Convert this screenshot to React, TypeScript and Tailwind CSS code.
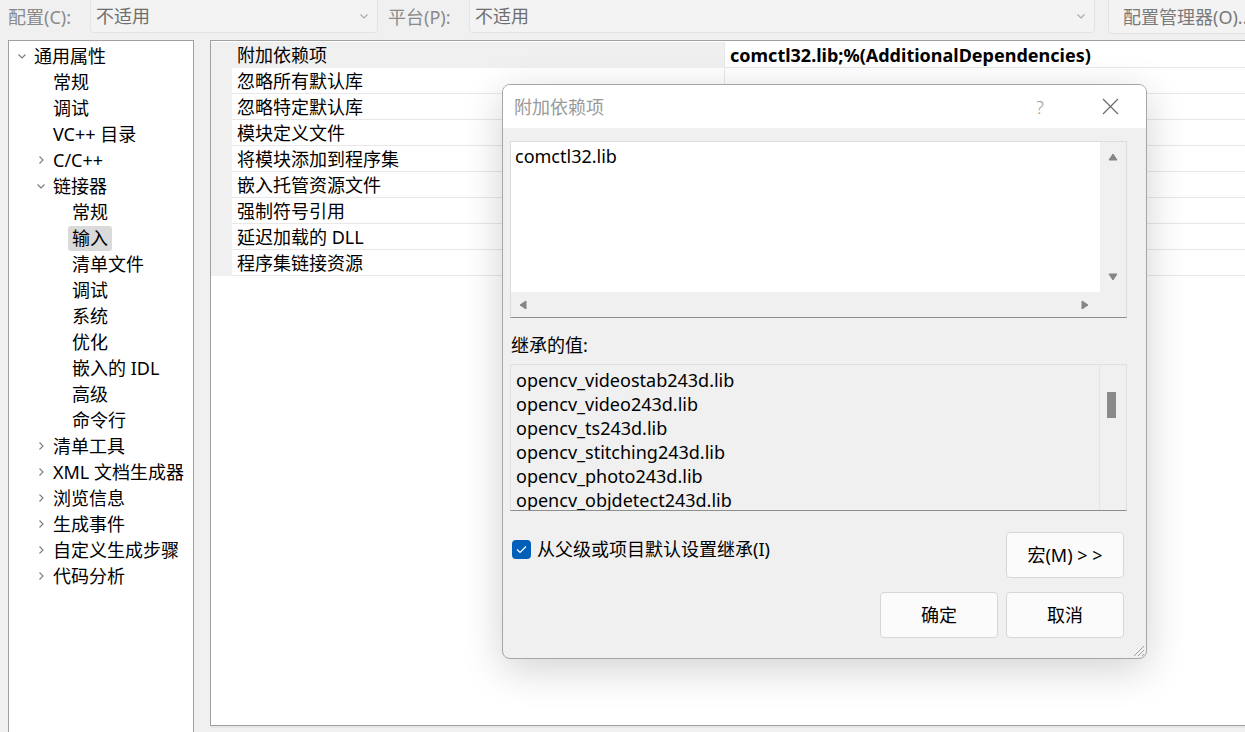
import React from 'react';

type TreeItem = { text: string; level: number; chevron?: 'down' | 'right'; selected?: boolean };

const treeItems: TreeItem[] = [
  { text: '通用属性', level: 0, chevron: 'down' },
  { text: '常规', level: 1 },
  { text: '调试', level: 1 },
  { text: 'VC++ 目录', level: 1 },
  { text: 'C/C++', level: 1, chevron: 'right' },
  { text: '链接器', level: 1, chevron: 'down' },
  { text: '常规', level: 2 },
  { text: '输入', level: 2, selected: true },
  { text: '清单文件', level: 2 },
  { text: '调试', level: 2 },
  { text: '系统', level: 2 },
  { text: '优化', level: 2 },
  { text: '嵌入的 IDL', level: 2 },
  { text: '高级', level: 2 },
  { text: '命令行', level: 2 },
  { text: '清单工具', level: 1, chevron: 'right' },
  { text: 'XML 文档生成器', level: 1, chevron: 'right' },
  { text: '浏览信息', level: 1, chevron: 'right' },
  { text: '生成事件', level: 1, chevron: 'right' },
  { text: '自定义生成步骤', level: 1, chevron: 'right' },
  { text: '代码分析', level: 1, chevron: 'right' },
];

const properties = [
  '附加依赖项',
  '忽略所有默认库',
  '忽略特定默认库',
  '模块定义文件',
  '将模块添加到程序集',
  '嵌入托管资源文件',
  '强制符号引用',
  '延迟加载的 DLL',
  '程序集链接资源',
];

const inherited = [
  'opencv_videostab243d.lib',
  'opencv_video243d.lib',
  'opencv_ts243d.lib',
  'opencv_stitching243d.lib',
  'opencv_photo243d.lib',
  'opencv_objdetect243d.lib',
];

const Chevron = ({ dir, color = '#7a7a7a' }: { dir: 'down' | 'right'; color?: string }) => (
  <svg width="10" height="10" viewBox="0 0 10 10" fill="none">
    {dir === 'down' ? (
      <path d="M1.5 3.5 L5 7 L8.5 3.5" stroke={color} strokeWidth="1.1" />
    ) : (
      <path d="M3.5 1.5 L7 5 L3.5 8.5" stroke={color} strokeWidth="1.1" />
    )}
  </svg>
);

const Tri = ({ dir }: { dir: 'up' | 'down' | 'left' | 'right' }) => {
  const pts = {
    up: '1,8 5,2 9,8',
    down: '1,2 5,8 9,2',
    left: '8,1 2,5 8,9',
    right: '2,1 8,5 2,9',
  }[dir];
  return (
    <svg width="10" height="10" viewBox="0 0 10 10">
      <polygon points={pts} fill="#858585" strokeLinejoin="round" stroke="#858585" strokeWidth="1" />
    </svg>
  );
};

const ComboBox = ({ width }: { width: string }) => (
  <div className={`${width} shrink-0 h-[33px] flex items-center justify-between pl-[5px] pr-[8px] bg-[#f3f3f3] border border-t-0 border-[#e3e3e3] rounded-b-[4px]`}>
    <span className="text-[#6e6e6e]">不适用</span>
    <Chevron dir="down" color="#a8a8a8" />
  </div>
);

const App: React.FC = () => {
  return (
    <div className="relative w-[1245px] h-[732px] overflow-hidden bg-[#f0f0f0] text-[18px] leading-[24px] text-black font-['Noto_Sans','Noto_Sans_CJK_SC',sans-serif]">
      {/* top bar */}
      <div className="flex items-start h-[40px]">
        <span className="shrink-0 ml-[8px] w-[82px] h-[33px] flex items-center text-[#8a8a8a]">配置(C):</span>
        <ComboBox width="w-[288px]" />
        <span className="shrink-0 ml-[10px] w-[81px] h-[33px] flex items-center text-[#8a8a8a]">平台(P):</span>
        <ComboBox width="w-[626px]" />
        <div className="ml-[13px] flex-1 min-w-0 h-[34px] flex items-center pl-[14px] bg-[#f3f3f3] border border-t-0 border-r-0 border-[#e3e3e3] rounded-bl-[4px] text-[#7a7a7a] whitespace-nowrap overflow-hidden">
          配置管理器(O)...
        </div>
      </div>

      <div className="flex h-[692px]">
        {/* tree */}
        <div className="ml-[8px] w-[186px] h-[720px] bg-white border-l border-t border-r border-[#a0a0a0] pt-[2px]">
          {treeItems.map((item, i) => (
            <div key={i} className="h-[26px] flex items-center" style={{ paddingLeft: item.level * 19 + 25 }}>
              <span className={`w-[10px] ${item.level === 0 ? '-ml-[17px] mr-[7px]' : '-ml-[17px] mr-[7px]'} flex items-center`}>
                {item.chevron && <Chevron dir={item.chevron} />}
              </span>
              <span
                className={
                  item.selected
                    ? 'bg-[#dadada] rounded-[3px] px-[4px] -ml-[4px] h-[25px] flex items-center'
                    : 'whitespace-nowrap'
                }
              >
                {item.text}
              </span>
            </div>
          ))}
        </div>

        {/* property grid */}
        <div className="ml-[16px] flex-1 flex flex-col">
          <div className="h-[686px] bg-white border-l border-t border-b border-[#a0a0a0] pt-[1px]">
            {properties.map((p, i) => (
              <div key={p} className="flex h-[26px]">
                <div className="w-[21px] bg-[#f0f0f0]" />
                <div
                  className={`w-[493px] border-r border-[#e8e8e8] pl-[5px] flex items-center ${
                    i === 0 ? 'bg-[#f0f0f0] border-b border-b-[#f0f0f0]' : 'border-b border-b-[#e8e8e8]'
                  }`}
                >
                  {p}
                </div>
                <div className="flex-1 border-b border-[#e8e8e8] pl-[5px] flex items-center font-bold whitespace-nowrap">
                  {i === 0 ? 'comctl32.lib;%(AdditionalDependencies)' : ''}
                </div>
              </div>
            ))}
          </div>
          <div className="h-[2px] bg-[#e6e6e6]" />
        </div>
      </div>

      {/* dialog */}
      <div className="absolute left-[502px] top-[84px] w-[645px] h-[575px] rounded-[8px] border border-[#a6a6a6] bg-[#f0f0f0] overflow-hidden shadow-[0_10px_40px_rgba(0,0,0,0.18)] flex flex-col">
        <div className="h-[43px] bg-white flex items-center justify-between pl-[11px]">
          <span className="text-[#9a9a9a]">附加依赖项</span>
          <div className="flex items-center">
            <span className="text-[#9a9a9a] font-light mr-[58px]">?</span>
            <svg width="17" height="17" viewBox="0 0 17 17" className="mr-[27px]">
              <path d="M1 1 L16 16 M16 1 L1 16" stroke="#6a6a6a" strokeWidth="1.2" />
            </svg>
          </div>
        </div>

        <div className="flex-1 pl-[7px] pt-[13px] relative">
          {/* edit box */}
          <div className="w-[617px] h-[177px] border border-[#dcdcdc] border-b-[#8f8f8f] bg-[#f0f0f0] flex flex-col">
            <div className="flex flex-1">
              <div className="flex-1 bg-white pl-[4px] pt-[2px]">comctl32.lib</div>
              <div className="w-[26px] flex flex-col items-center justify-between py-[10px]">
                <Tri dir="up" />
                <Tri dir="down" />
              </div>
            </div>
            <div className="h-[25px] flex items-center justify-between pl-[7px] pr-[36px]">
              <Tri dir="left" />
              <Tri dir="right" />
            </div>
          </div>

          <div className="mt-[15px] pl-[1px]">继承的值:</div>

          {/* inherited list */}
          <div className="mt-[7px] w-[617px] h-[147px] border border-[#e0e0e0] border-b-[#8f8f8f] flex">
            <div className="flex-1 pl-[5px] pt-[3px] overflow-hidden">
              {inherited.map((l) => (
                <div key={l} className="h-[24px] leading-[24px] whitespace-nowrap">{l}</div>
              ))}
            </div>
            <div className="w-[27px] border-l border-[#e4e4e4] pt-[27px] pl-[7px]">
              <div className="w-[9px] h-[26px] bg-[#8a8a8a]" />
            </div>
          </div>

          {/* inherit checkbox + macros */}
          <div className="mt-[21px] w-[614px] flex items-start justify-between">
            <div className="mt-[5px] flex items-center h-[24px] pl-[2px]">
              <div className="w-[19px] h-[19px] rounded-[4px] bg-[#005fb8] flex items-center justify-center mr-[6px]">
                <svg width="11" height="9" viewBox="0 0 11 9">
                  <path d="M1 4.5 L4 7.5 L10 1.5" stroke="white" strokeWidth="1.2" fill="none" />
                </svg>
              </div>
              <span>从父级或项目默认设置继承(I)</span>
            </div>
            <button className="w-[118px] h-[46px] bg-[#fbfbfb] border border-[#d6d6d6] rounded-[4px]">宏(M) &gt; &gt;</button>
          </div>

          <div className="mt-[14px] w-[614px] flex justify-end gap-[8px]">
            <button className="w-[118px] h-[46px] bg-[#fbfbfb] border border-[#d6d6d6] rounded-[4px]">确定</button>
            <button className="w-[118px] h-[46px] bg-[#fbfbfb] border border-[#d6d6d6] rounded-[4px]">取消</button>
          </div>

          {/* resize grip */}
          <svg width="14" height="14" viewBox="0 0 14 14" className="absolute right-[1px] bottom-[1px]">
            <path d="M13 3 L3 13 M13 7 L7 13 M13 11 L11 13" stroke="#a0a0a0" strokeWidth="1" />
          </svg>
        </div>
      </div>
    </div>
  );
};

export default App;
